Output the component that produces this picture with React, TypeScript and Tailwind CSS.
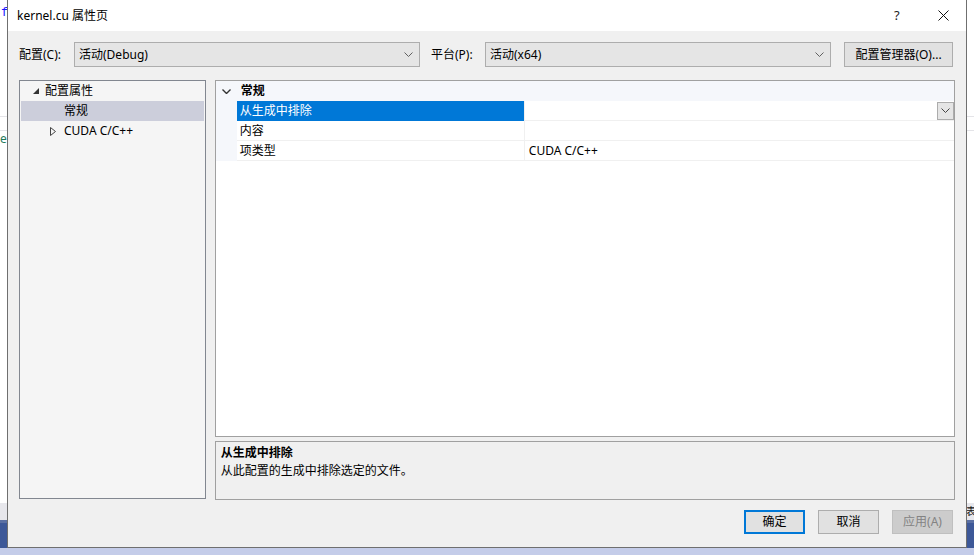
import { useState } from 'react';

const font = { fontFamily: '"Noto Sans", "Noto Sans CJK SC", sans-serif' };

const Chevron = ({ color = '#606060' }) => (
    <svg width="9" height="5" viewBox="0 0 9 5">
        <path d="M0.5 0.5 L4.5 4.5 L8.5 0.5" fill="none" stroke={color} strokeWidth="1" />
    </svg>
);

const Combo = ({ value }) => (
    <div className="flex items-center w-[346px] h-[25px] border border-[#adadad] bg-[#e5e5e5] pl-[4px] pr-[6px]">
        <span className="flex-1 text-[#000]">{value}</span>
        <Chevron />
    </div>
);

const Button = ({ label, primary = false, disabled = false }) => (
    <button
        className={
            primary
                ? 'w-[61px] h-[24px] border-2 border-[#0078d7] bg-[#e1e1e1] text-black'
                : disabled
                ? 'w-[61px] h-[24px] border border-[#bfbfbf] bg-[#cccccc] text-[#838383]'
                : 'w-[61px] h-[24px] border border-[#adadad] bg-[#e1e1e1] text-black'
        }
    >
        {label}
    </button>
);

const rows = [
    { name: '从生成中排除', value: '' },
    { name: '内容', value: '' },
    { name: '项类型', value: 'CUDA C/C++' },
];

const App = () => {
    const [active, setActive] = useState(0);

    return (
        <div className="relative w-[974px] h-[555px] overflow-hidden text-[12px] bg-white" style={font}>
            {/* editor and taskbar behind the dialog */}
            <div className="flex flex-col h-full">
                <div className="relative flex-1 bg-white">
                    <span className="absolute left-[1px] top-[3px] text-[#1a1aff] text-[13px] font-mono">f</span>
                    <div className="absolute left-0 top-[116px] w-full h-[1px] bg-[#e4e4e8]" />
                    <div className="absolute left-0 top-[130px] w-full h-[1px] bg-[#e4e4e8]" />
                    <span className="absolute left-0 top-[130px] text-[#1e7a5a] text-[12px]">e</span>
                    <div className="absolute left-0 top-[503px] w-full h-[17px] bg-[#e7e7ec]" />
                    <span className="absolute left-[966px] top-[504px] text-[10px] text-[#111]">表</span>
                </div>
                <div className="h-[3px] bg-[#5b70a3]" />
                <div className="h-[25px] bg-[#3d5898]" />
                <div className="h-[7px] bg-[#c4cce9]" />
            </div>

            {/* property pages window */}
            <div className="absolute left-[7px] top-0 w-[960px] h-[548px] flex flex-col border-x border-b border-[#6f6f6f] bg-[#f0f0f0]">
                <div className="flex items-center h-[31px] bg-white pl-[9px]">
                    <span className="flex-1 text-[12px] text-black">kernel.cu 属性页</span>
                    <span className="w-[12px] text-[13px] text-[#222] mr-[32px]">?</span>
                    <svg width="11" height="11" viewBox="0 0 11 11" className="mr-[17px]">
                        <path d="M0.5 0.5 L10.5 10.5 M10.5 0.5 L0.5 10.5" stroke="#111" strokeWidth="1" />
                    </svg>
                </div>

                <div className="flex flex-col flex-1 px-[11px] pt-[11px]">
                    <div className="flex items-center h-[25px]">
                        <span className="w-[55px]">配置(C):</span>
                        <Combo value="活动(Debug)" />
                        <span className="w-[54px] ml-[11px]">平台(P):</span>
                        <Combo value="活动(x64)" />
                        <button className="ml-[13px] w-[109px] h-[25px] border border-[#adadad] bg-[#e1e1e1]">
                            配置管理器(O)...
                        </button>
                    </div>

                    <div className="flex mt-[13px] h-[420px]">
                        {/* tree */}
                        <div className="w-[187px] h-[419px] border border-[#828790] bg-[#f5f5f5] p-[1px] pt-0">
                            <div className="flex items-center h-[20px]">
                                <svg width="6" height="6" viewBox="0 0 6 6" className="ml-[12px] mr-[6px]">
                                    <polygon points="6,0 6,6 0,6" fill="#333" />
                                </svg>
                                <span>配置属性</span>
                            </div>
                            <div className="flex items-center h-[20px] bg-[#cccedb] pl-[43px]">常规</div>
                            <div className="flex items-center h-[20px]">
                                <svg width="6" height="9" viewBox="0 0 6 9" className="ml-[29px] mr-[8px]">
                                    <polygon points="0.5,0.5 5.5,4.5 0.5,8.5" fill="none" stroke="#444" strokeWidth="1" />
                                </svg>
                                <span>CUDA C/C++</span>
                            </div>
                        </div>

                        <div className="flex flex-col ml-[9px] w-[741px]">
                            {/* property grid */}
                            <div className="flex flex-col h-[358px] border border-[#a0a0a0] bg-white">
                                <div className="flex items-center h-[20px] bg-[#f5f7fb]">
                                    <svg width="9" height="5" viewBox="0 0 9 5" className="ml-[6px] mr-[10px]">
                                        <path d="M0.5 0.5 L4.5 4.5 L8.5 0.5" fill="none" stroke="#333" strokeWidth="1.4" />
                                    </svg>
                                    <span className="font-bold">常规</span>
                                </div>
                                {rows.map((row, i) => (
                                    <div key={i} className="flex h-[20px]" onClick={() => setActive(i)}>
                                        <div className="w-[21px] bg-[#f5f7fb]" />
                                        <div
                                            className={
                                                i === active
                                                    ? 'flex items-center w-[287px] pl-[3px] bg-[#0078d7] text-white'
                                                    : 'flex items-center w-[287px] pl-[3px] border-b border-[#f0f0f0]'
                                            }
                                        >
                                            {row.name}
                                        </div>
                                        <div className="flex items-center flex-1 pl-[4px] border-b border-l border-[#f0f0f0]">
                                            <span className="flex-1">{row.value}</span>
                                            {i === active && (
                                                <div className="flex items-center justify-center w-[17px] h-[18px] border border-[#acacac] bg-[#e5e5e5]">
                                                    <Chevron color="#444" />
                                                </div>
                                            )}
                                        </div>
                                    </div>
                                ))}
                            </div>

                            {/* description */}
                            <div className="mt-[4px] h-[59px] border border-[#a0a0a0] bg-[#f0f0f0] pl-[5px] pt-[2px]">
                                <div className="font-bold leading-[18px]">从生成中排除</div>
                                <div className="leading-[18px]">从此配置的生成中排除选定的文件。</div>
                            </div>
                        </div>
                    </div>

                    <div className="flex justify-end gap-[13px] mt-[10px] pr-[2px]">
                        <Button label="确定" primary />
                        <Button label="取消" />
                        <Button label="应用(A)" disabled />
                    </div>
                </div>
            </div>
        </div>
    );
};

export default App;
